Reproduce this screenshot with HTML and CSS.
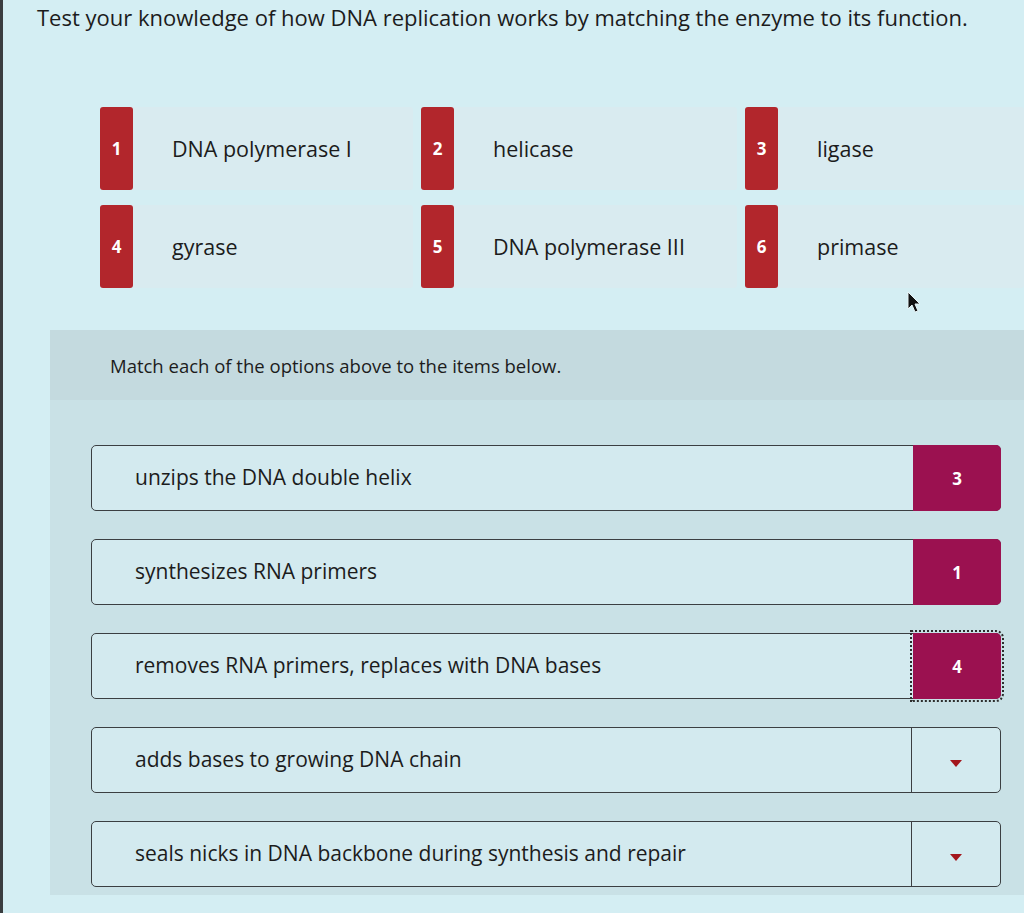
FILE: index.html
```html
<!DOCTYPE html>
<html lang="en">
<head>
    <meta charset="UTF-8">
    <meta name="viewport" content="width=device-width, initial-scale=1.0">
    <title>DNA Replication Matching</title>
    <link rel="stylesheet" href="styles.css">
</head>
<body>
    <p class="prompt">Test your knowledge of how DNA replication works by matching the enzyme to its function.</p>

    <div class="options">
        <div class="option"><span class="badge">1</span><span class="label">DNA polymerase I</span></div>
        <div class="option"><span class="badge">2</span><span class="label">helicase</span></div>
        <div class="option"><span class="badge">3</span><span class="label">ligase</span></div>
        <div class="option"><span class="badge">4</span><span class="label">gyrase</span></div>
        <div class="option"><span class="badge">5</span><span class="label">DNA polymerase III</span></div>
        <div class="option"><span class="badge">6</span><span class="label">primase</span></div>
    </div>

    <div class="panel">
        <div class="panel-head">Match each of the options above to the items below.</div>
        <div class="panel-body">
            <div class="item">
                <span class="text">unzips the DNA double helix</span>
                <span class="answer filled">3</span>
            </div>
            <div class="item">
                <span class="text">synthesizes RNA primers</span>
                <span class="answer filled">1</span>
            </div>
            <div class="item">
                <span class="text">removes RNA primers, replaces with DNA bases</span>
                <span class="answer filled focus">4</span>
            </div>
            <div class="item">
                <span class="text">adds bases to growing DNA chain</span>
                <span class="answer"><span class="caret"></span></span>
            </div>
            <div class="item">
                <span class="text">seals nicks in DNA backbone during synthesis and repair</span>
                <span class="answer"><span class="caret"></span></span>
            </div>
        </div>
    </div>

    <svg class="cursor" width="16" height="24" viewBox="0 0 16 24">
        <path d="M1 1 L1 18 L5 14 L8 21 L11 20 L8 13 L13 13 Z" fill="#111" stroke="#e8f4f6" stroke-width="1"/>
    </svg>
</body>
</html>
```

FILE: styles.css
```css
body {
    margin: 0;
    font-family: "Open Sans", "Liberation Sans", sans-serif;
    background: #d4eef3;
    color: #1c1c1c;
    border-left: 3px solid #3a3d3f;
    min-height: 913px;
    box-sizing: border-box;
    position: relative;
    overflow: hidden;
}

.prompt {
    margin: 0;
    padding: 2px 0 0 34px;
    font-size: 22px;
    line-height: 30px;
}

/* enzyme choices */
.options {
    display: grid;
    grid-template-columns: 313px 316px 1fr;
    grid-auto-rows: 83px;
    column-gap: 8px;
    row-gap: 15px;
    margin: 75px 0 0 97px;
}
.option {
    display: flex;
    align-items: center;
    background: #d9ebf0;
    border-radius: 3px;
}
.badge {
    align-self: stretch;
    width: 33px;
    flex: none;
    display: flex;
    align-items: center;
    justify-content: center;
    background: #b2262c;
    border-radius: 3px;
    color: #fff;
    font-weight: 700;
    font-size: 17px;
}
.label {
    padding-left: 39px;
    font-size: 21.5px;
}

/* matching area */
.panel {
    margin: 42px 0 0 47px;
    background: #c9e1e6;
    padding-bottom: 8px;
}
.panel-head {
    height: 70px;
    display: flex;
    align-items: center;
    padding-left: 60px;
    font-size: 18.5px;
    background: #c4dadf;
}
.panel-body {
    display: flex;
    flex-direction: column;
    gap: 28px;
    padding: 45px 23px 0 41px;
}
.item {
    display: flex;
    height: 66px;
    border: 1px solid #3b3f42;
    border-radius: 5px;
    background: #d3eaef;
    box-sizing: border-box;
}
.item .text {
    flex: 1;
    display: flex;
    align-items: center;
    padding-left: 43px;
    padding-bottom: 3px;
    font-size: 21px;
}
.answer {
    width: 88px;
    flex: none;
    display: flex;
    align-items: center;
    justify-content: center;
    border-left: 1px solid #3b3f42;
    border-radius: 0 4px 4px 0;
}
.answer.filled {
    background: #9b1150;
    border-left: none;
    margin: -1px -1px -1px 0;
    border-radius: 0 5px 5px 0;
    color: #fff;
    font-weight: 700;
    font-size: 17px;
}
.answer.focus {
    outline: 2px dotted #2d2d2d;
    outline-offset: 1px;
}
.caret {
    width: 0;
    height: 0;
    border-left: 6px solid transparent;
    border-right: 6px solid transparent;
    border-top: 7px solid #a3161c;
    margin-top: 6px;
}

.cursor {
    position: absolute;
    left: 904px;
    top: 291px;
}
```
